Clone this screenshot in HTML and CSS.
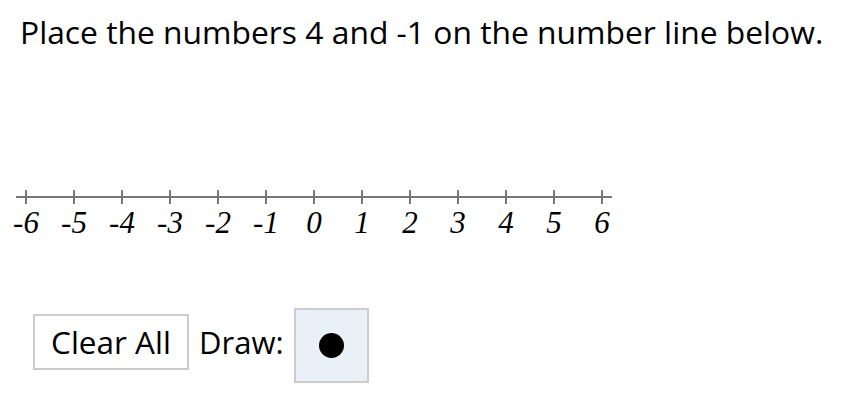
FILE: index.html
```html
<!DOCTYPE html>
<html>
<head>
<meta charset="utf-8">
<link rel="stylesheet" href="styles.css">
</head>
<body>
<div class="question">
  <p class="prompt">Place the numbers 4 and -1 on the number line below.</p>
  <svg class="numberline" width="640" height="60" viewBox="0 0 640 60">
    <line class="axis" x1="16" y1="26" x2="612" y2="26"/>
    <g class="ticks">
      <line x1="26" y1="19" x2="26" y2="33"/>
      <line x1="74" y1="19" x2="74" y2="33"/>
      <line x1="122" y1="19" x2="122" y2="33"/>
      <line x1="170" y1="19" x2="170" y2="33"/>
      <line x1="218" y1="19" x2="218" y2="33"/>
      <line x1="266" y1="19" x2="266" y2="33"/>
      <line x1="314" y1="19" x2="314" y2="33"/>
      <line x1="362" y1="19" x2="362" y2="33"/>
      <line x1="410" y1="19" x2="410" y2="33"/>
      <line x1="458" y1="19" x2="458" y2="33"/>
      <line x1="506" y1="19" x2="506" y2="33"/>
      <line x1="554" y1="19" x2="554" y2="33"/>
      <line x1="602" y1="19" x2="602" y2="33"/>
    </g>
    <g class="labels">
      <text x="26" y="62">-6</text>
      <text x="74" y="62">-5</text>
      <text x="122" y="62">-4</text>
      <text x="170" y="62">-3</text>
      <text x="218" y="62">-2</text>
      <text x="266" y="62">-1</text>
      <text x="314" y="62">0</text>
      <text x="362" y="62">1</text>
      <text x="410" y="62">2</text>
      <text x="458" y="62">3</text>
      <text x="506" y="62">4</text>
      <text x="554" y="62">5</text>
      <text x="602" y="62">6</text>
    </g>
  </svg>
  <div class="controls">
    <button class="btn-clear" type="button">Clear All</button>
    <span class="draw-label">Draw:</span>
    <button class="tool-point" type="button" aria-label="Point"><span class="dot"></span></button>
  </div>
</div>
</body>
</html>
```
FILE: styles.css
```css
html, body {
  margin: 0;
  padding: 0;
  background: #fff;
}

body {
  font-family: "Open Sans", "Noto Sans", sans-serif;
  color: #000;
}

.question {
  padding: 10px 0 0 20px;
}

.prompt {
  margin: 0;
  font-size: 31.8px;
  line-height: 44px;
}

.numberline {
  display: block;
  margin: 117px 0 0 -20px;
  overflow: visible;
}

.axis,
.ticks line {
  stroke: #777;
  stroke-width: 2;
}

.labels text {
  font-family: "Liberation Serif", "Times New Roman", serif;
  font-style: italic;
  font-size: 31px;
  text-anchor: middle;
  fill: #000;
}

.controls {
  display: flex;
  align-items: flex-start;
  gap: 10px;
  margin: 77px 0 0 13px;
}

.btn-clear {
  box-sizing: border-box;
  width: 156px;
  height: 56px;
  margin-top: 6px;
  border: 2px solid #ccc;
  background: #fff;
  font-family: inherit;
  font-size: 31.5px;
  line-height: 52px;
  color: #000;
  padding: 0;
}

.draw-label {
  margin-top: 6px;
  font-size: 31px;
  line-height: 56px;
}

.tool-point {
  box-sizing: border-box;
  width: 75px;
  height: 75px;
  border: 2px solid #ccc;
  background: #e9f0f8;
  display: flex;
  align-items: center;
  justify-content: center;
  padding: 0;
}

.dot {
  width: 25px;
  height: 25px;
  border-radius: 50%;
  background: #000;
}
```
